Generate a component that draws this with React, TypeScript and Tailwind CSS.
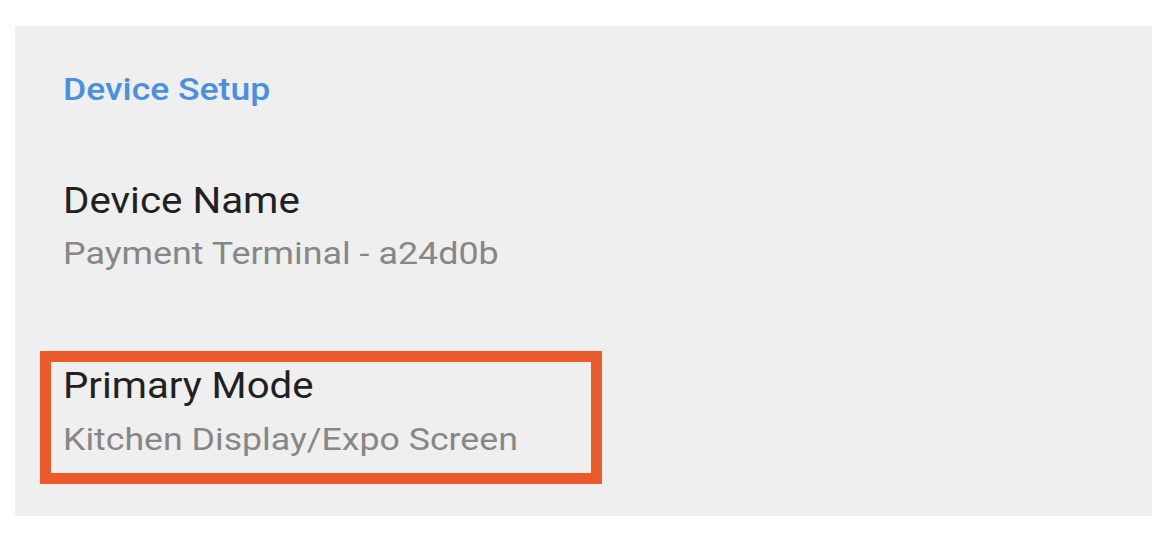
export default function App() {
  return (
    <div className="min-h-[540px] w-full bg-white pt-[26px] pl-[15px] pr-[22px] font-['Roboto',sans-serif]">
      <div className="h-[490px] w-[1137px] bg-[#efefef] pl-[48px] pt-[47px]">
        <h2 className="w-fit origin-left scale-x-[1.11] text-[32px] leading-[32px] font-medium text-[#4a90e2]">Device Setup</h2>

        <div className="mt-[78px] w-fit origin-left scale-x-[1.12]">
          <div className="text-[36px] leading-[36px] text-[#212121]">Device Name</div>
          <div className="mt-[18px] text-[32px] leading-[32px] text-[#878787]">Payment Terminal - a24d0b</div>
        </div>

        <div className="ml-[-23px] mt-[82px] w-[562px] border-[11px] border-[#eb5a2b] pl-[12px] pt-[6px] pb-[18px]">
          <div className="w-fit origin-left scale-x-[1.115]">
            <div className="text-[36px] leading-[36px] text-[#212121]">Primary Mode</div>
            <div className="mt-[19px] text-[32px] leading-[32px] text-[#878787]">Kitchen Display/Expo Screen</div>
          </div>
        </div>
      </div>
    </div>
  );
}
